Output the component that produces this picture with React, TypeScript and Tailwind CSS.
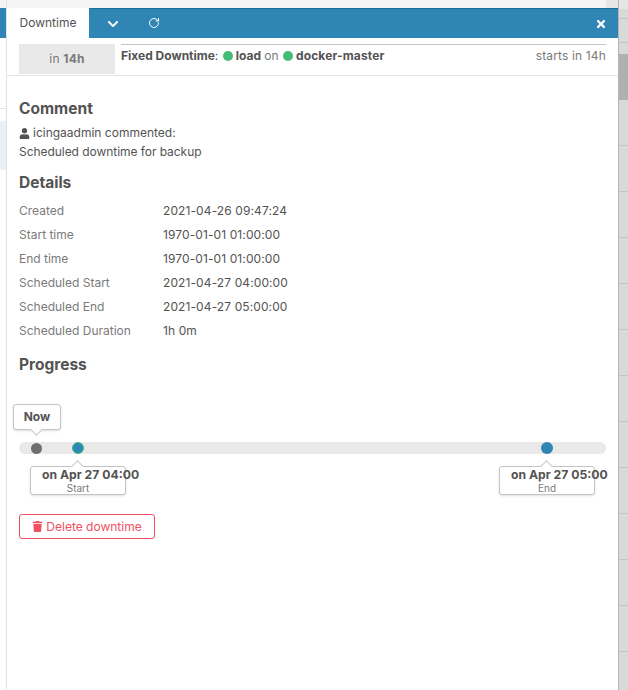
import React from 'react';
import { RotateCw } from 'lucide-react';
import { FaChevronDown, FaTimes, FaUser, FaTrash } from 'react-icons/fa';

const details = [
  ['Created', '2021-04-26 09:47:24'],
  ['Start time', '1970-01-01 01:00:00'],
  ['End time', '1970-01-01 01:00:00'],
  ['Scheduled Start', '2021-04-27 04:00:00'],
  ['Scheduled End', '2021-04-27 05:00:00'],
  ['Scheduled Duration', '1h 0m'],
];

const Dot = () => <span className="inline-block w-[10px] h-[10px] rounded-full bg-[#44bb77] mr-[2px] ml-[1px]"></span>;

const Callout = ({ title, sub, className }: { title: string; sub: string; className: string }) => (
  <div className={`absolute top-[24px] h-[29px] w-[96px] bg-white border border-[#c4c4c4] rounded-[3px] shadow-sm text-center ${className}`}>
    <div className="absolute -top-[5px] left-[42px] w-[9px] h-[9px] rotate-45 bg-white border-l border-t border-[#c4c4c4]"></div>
    <div className="relative text-[12.2px] leading-[15px] font-bold text-[#535353] whitespace-nowrap pl-[11px] text-left">{title}</div>
    <div className="relative text-[10px] leading-[12px] text-[#7a7a7a]">{sub}</div>
  </div>
);

export default function App() {
  return (
    <div className="flex w-[628px] h-[690px] overflow-hidden bg-white text-[#535353] font-['Inter',sans-serif] text-[12px]">
      {/* left: list behind the detail panel */}
      <div className="w-[6px] shrink-0 flex flex-col bg-white">
        <div className="h-[8px] bg-[#f5f5f5]"></div>
        <div className="h-[30px] bg-[#2f86b4]"></div>
        <div className="h-[71px] border-b border-[#e4e4e4]"></div>
        <div className="h-[12px]"></div>
        <div className="h-[49px] bg-[#e8f1f8]"></div>
      </div>

      {/* detail panel */}
      <div className="w-[612px] shrink-0 flex flex-col border-l border-[#e2e2e2]">
        <div className="h-[8px] flex shrink-0">
          <div className="w-[599px] bg-[#f5f5f5]"></div>
          <div className="flex-1 bg-[#e6e6e6]"></div>
        </div>
        <div className="h-[30px] shrink-0 flex items-stretch bg-[#2f86b4] border-t border-[#1f6d96] text-white">
          <div className="w-[82px] bg-white text-[#535353] flex items-center justify-center text-[12px] -mt-[1px]">Downtime</div>
          <div className="w-[48px] flex items-center justify-center">
            <FaChevronDown size={12} />
          </div>
          <div className="w-[33px] flex items-center justify-center -mt-[1px]">
            <RotateCw size={12} strokeWidth={2} />
          </div>
          <div className="flex-1 flex items-center justify-end pr-[11px]">
            <FaTimes size={12} />
          </div>
        </div>

        <div className="h-[38px] shrink-0 flex pl-[12px] pr-[12px] pt-[6px] border-b border-[#e6e6e6]">
          <div className="w-[96px] h-[30px] bg-[#e9e9e9] flex items-center justify-center text-[#7a7a7a]">
            <span className="tracking-[0.2px]">in <b className="font-bold">14h</b></span>
          </div>
          <div className="flex-1 ml-[6px] border-t border-[#c4c4c4] flex justify-between items-start pt-[3px] leading-[15px]">
            <span className="flex items-center">
              <b className="font-bold">Fixed Downtime</b>:&nbsp;<Dot /><b className="font-bold ml-[1px]">load</b>&nbsp;<span className="text-[#7a7a7a]">on</span>&nbsp;<Dot /><b className="font-bold ml-[1px] tracking-[0.12px]">docker-master</b>
            </span>
            <span className="text-[#7a7a7a] tracking-[0.15px]">starts in 14h</span>
          </div>
        </div>

        <div className="pl-[12px] pr-[12px] flex-1">
          <h2 className="text-[15.5px] leading-[20px] font-bold mt-[23px]">Comment</h2>
          <div className="mt-[5px] leading-[18px] flex items-center">
            <FaUser size={11} className="mr-[3px]" />icingaadmin commented:
          </div>
          <div className="leading-[18px] mt-[1px] tracking-[-0.05px]">Scheduled downtime for backup</div>

          <h2 className="text-[15.5px] leading-[20px] font-bold mt-[12px]">Details</h2>
          <div className="mt-[6px]">
            {details.map(([k, v]) => (
              <div key={k} className="flex h-[24px] items-center">
                <div className="w-[144px] text-[#7a7a7a]">{k}</div>
                <div className="tracking-[0.1px]">{v}</div>
              </div>
            ))}
          </div>

          <h2 className="text-[15.5px] leading-[20px] font-bold mt-[12px]">Progress</h2>

          <div className="relative mt-[67px] h-[12px] bg-[#e9e9e9] rounded-full">
            <div className="absolute -left-[6px] -top-[38px] h-[26px] w-[48px] bg-white border border-[#c4c4c4] rounded-[3px] flex items-center justify-center text-[12px] font-bold shadow-sm">
              <div className="absolute -bottom-[5px] left-[18px] w-[9px] h-[9px] rotate-45 bg-white border-r border-b border-[#c4c4c4]"></div>
              <span className="relative">Now</span>
            </div>
            <div className="absolute left-[12px] top-[1px] w-[11px] h-[11px] rounded-full bg-[#6e6e6e]"></div>
            <div className="absolute left-[53px] top-[0px] w-[12px] h-[12px] rounded-full bg-[#2f86b4] border border-[#44bb77]"></div>
            <div className="absolute left-[522px] top-[0px] w-[12px] h-[12px] rounded-full bg-[#2f86b4]"></div>
            <Callout title="on Apr 27 04:00" sub="Start" className="left-[11px]" />
            <Callout title="on Apr 27 05:00" sub="End" className="left-[480px]" />
          </div>

          <button className="mt-[60px] h-[25px] w-[136px] rounded-[3px] border border-[#f05060] text-[#f05060] flex items-center justify-center bg-white">
            <FaTrash size={11} className="mr-[3px]" />Delete downtime
          </button>
        </div>
      </div>

      {/* right: list rows behind the detail panel */}
      <div className="flex-1 flex flex-col bg-[#d9d9d9] border-l border-[#b5b5b5]">
        <div className="h-[9px] bg-[#e6e6e6]"></div>
        <div className="h-[10px] border-b border-[#c4c4c4]"></div>
        <div className="h-[24px] border-b border-[#c4c4c4]"></div>
        <div className="h-[11px]"></div>
        <div className="h-[46px] bg-[#b0b0b0]"></div>
        {[145, 191, 237, 283, 329, 375, 421, 467, 513, 559, 605, 651].map((y) => (
          <div key={y} className="h-[46px] border-b border-[#c4c4c4] shrink-0"></div>
        ))}
      </div>
    </div>
  );
}
